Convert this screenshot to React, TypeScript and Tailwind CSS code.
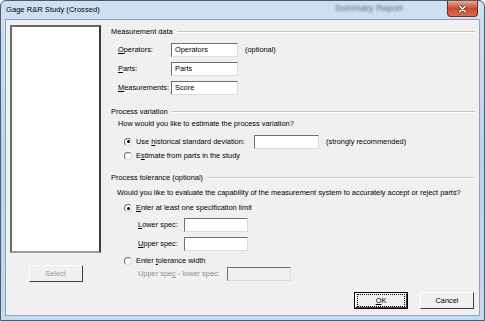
import React from "react";

const font = { fontFamily: '"Liberation Sans", Arial, sans-serif' };

function U({ children }: { children: React.ReactNode }) {
  return <span className="underline underline-offset-[1px]">{children}</span>;
}

function Field({ value, w, disabled }: { value?: string; w: string; disabled?: boolean }) {
  return (
    <div
      className={`${w} h-[14px] border border-t-[#6f6f6f] border-l-[#6f6f6f] border-r-[#dcdcdc] border-b-[#dcdcdc] ${
        disabled ? "bg-[#f0f0f0]" : "bg-white"
      } flex items-center pl-[3px] text-[7.4px] text-black`}
    >
      {value}
    </div>
  );
}

function Radio({ checked }: { checked?: boolean }) {
  return (
    <div className="w-[8px] h-[8px] rounded-full border border-[#6b6b6b] border-b-[#dadada] border-r-[#dadada] bg-white flex items-center justify-center">
      {checked && <div className="w-[3px] h-[3px] rounded-full bg-black" />}
    </div>
  );
}

function Header({ title }: { title: string }) {
  return (
    <div className="flex items-center h-[12px] text-[7.4px] text-black">
      <span>{title}</span>
      <div className="flex-1 ml-[4px] mr-[4px] border-t border-t-[#c9c9c9] border-b border-b-white" />
    </div>
  );
}

function Btn({ label, def, disabled }: { label: React.ReactNode; def?: boolean; disabled?: boolean }) {
  return (
    <div className={`w-[54px] h-[17px] ${def ? "border border-black" : ""}`}>
      <div className="w-full h-full border border-t-white border-l-white border-r-[#404040] border-b-[#404040] bg-[#f0f0f0] flex items-center justify-center">
        <div
          className={`w-full h-full m-[1px] flex items-center justify-center text-[7.4px] ${
            disabled ? "text-[#9a9a9a]" : "text-black"
          } ${def ? "border border-dotted border-black" : ""}`}
        >
          {label}
        </div>
      </div>
    </div>
  );
}

export default function App() {
  return (
    <div style={font} className="w-[485px] h-[321px] bg-white">
      <div className="w-[485px] h-[321px] flex flex-col rounded-t-[6px] border border-[#4d5b6c] bg-gradient-to-b from-[#cfe0f3] via-[#bcd3ed] to-[#c5d9f0]">
        {/* title bar */}
        <div className="h-[18px] flex items-center relative">
          <span className="ml-[5px] text-[7.6px] text-black">Gage R&amp;R Study (Crossed)</span>
          <span className="absolute left-[334px] top-[1px] text-[9px] text-[#5d6b7c] blur-[1.2px]">Summary Report</span>
          <div className="absolute right-[6px] top-0 w-[31px] h-[16px] rounded-b-[4px] border border-[#7a2a22] border-t-0 bg-gradient-to-b from-[#e9a897] via-[#c9492f] to-[#d86b52] flex items-center justify-center">
            <svg width="9" height="8" viewBox="0 0 9 8">
              <path d="M1.5 1 L7.5 7 M7.5 1 L1.5 7" stroke="#4a1a14" strokeWidth="2.6" strokeLinecap="round" />
              <path d="M1.5 1 L7.5 7 M7.5 1 L1.5 7" stroke="white" strokeWidth="1.6" strokeLinecap="round" />
            </svg>
          </div>
        </div>
        {/* client */}
        <div className="flex-1 mx-[4px] mb-[4px] border border-[#8ea3bd] bg-[#f0f0f0] flex">
          {/* left column */}
          <div className="w-[99px] flex flex-col items-start pl-[4px] pt-[5px]">
            <div className="w-[91px] h-[228px] bg-white border-2 border-t-[#6a6a6a] border-l-[#6a6a6a] border-r-[#3a3a3a] border-b-[#9a9a9a]" />
            <div className="w-[91px] flex justify-center mt-[12px]">
              <Btn label="Select" disabled />
            </div>
          </div>
          {/* right column */}
          <div className="flex-1 flex flex-col pl-[6px] pt-[6px] text-[7.4px] text-black">
            <Header title="Measurement data" />
            <div className="pl-[7px] flex flex-col">
              <div className="flex items-center mt-[4px] h-[15px]">
                <span className="w-[53px]"><U>O</U>perators:</span>
                <Field value="Operators" w="w-[67px]" />
                <span className="ml-[7px]">(optional)</span>
              </div>
              <div className="flex items-center mt-[4px] h-[15px]">
                <span className="w-[53px]"><U>P</U>arts:</span>
                <Field value="Parts" w="w-[67px]" />
              </div>
              <div className="flex items-center mt-[4px] h-[15px]">
                <span className="w-[53px]"><U>M</U>easurements:</span>
                <Field value="Score" w="w-[67px]" />
              </div>
            </div>

            <div className="mt-[11px]">
              <Header title="Process variation" />
            </div>
            <div className="pl-[7px] flex flex-col">
              <div className="h-[10px] mt-[1px] flex items-center">How would you like to estimate the process variation?</div>
              <div className="flex items-center mt-[6px] h-[13px] pl-[6px]">
                <Radio checked />
                <span className="ml-[4px] w-[118px]">Use <U>h</U>istorical standard deviation:</span>
                <Field w="w-[65px]" />
                <span className="ml-[7px]">(strongly recommended)</span>
              </div>
              <div className="flex items-center mt-[3px] h-[10px] pl-[6px]">
                <Radio />
                <span className="ml-[4px]">E<U>s</U>timate from parts in the study</span>
              </div>
            </div>

            <div className="mt-[11px]">
              <Header title="Process tolerance (optional)" />
            </div>
            <div className="pl-[6px] flex flex-col">
              <div className="h-[10px] mt-[4px] flex items-center whitespace-nowrap">
                Would you like to evaluate the capability of the measurement system to accurately accept or reject parts?
              </div>
              <div className="flex items-center mt-[5px] h-[10px] pl-[7px]">
                <Radio checked />
                <span className="ml-[4px]"><U>E</U>nter at least one specification limit</span>
              </div>
              <div className="flex items-center mt-[5px] h-[13px] pl-[21px]">
                <span className="w-[46px]"><U>L</U>ower spec:</span>
                <Field w="w-[64px]" />
              </div>
              <div className="flex items-center mt-[6px] h-[13px] pl-[21px]">
                <span className="w-[46px]"><U>U</U>pper spec:</span>
                <Field w="w-[64px]" />
              </div>
              <div className="flex items-center mt-[6px] h-[10px] pl-[7px]">
                <Radio />
                <span className="ml-[4px]">Enter <U>t</U>olerance width</span>
              </div>
              <div className="flex items-center mt-[1px] h-[14px] pl-[21px] text-[#8d8d8d]">
                <span className="w-[89px]">Upper spe<U>c</U> - lower spec:</span>
                <Field w="w-[64px]" disabled />
              </div>
            </div>

            <div className="flex justify-end gap-[12px] mt-[11px] pr-[5px]">
              <Btn label={<span><U>O</U>K</span>} def />
              <Btn label="Cancel" />
            </div>
          </div>
        </div>
      </div>
    </div>
  );
}
